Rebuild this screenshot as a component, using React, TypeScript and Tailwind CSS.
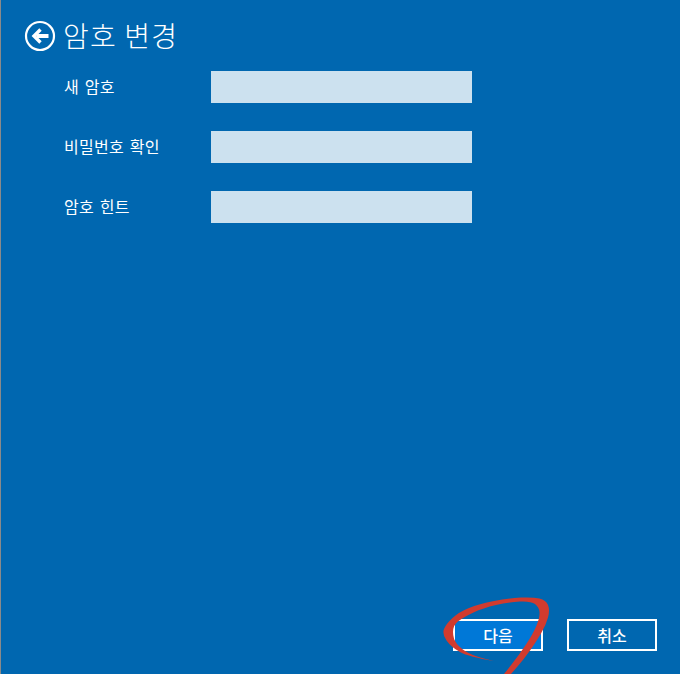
const font = { fontFamily: '"Noto Sans CJK KR", sans-serif' };

function Field({ label }: { label: string }) {
  return (
    <div className="flex h-8 items-center">
      <div className="-ml-px w-[147px] -translate-y-px text-[16px] leading-8 tracking-[0.25px] text-white [word-spacing:2px]">{label}</div>
      <input className="h-8 w-[261px] bg-[#cce1ef] outline-none" />
    </div>
  );
}

function BackIcon() {
  return (
    <svg width="32" height="32" viewBox="0 0 32 32" fill="none">
      <circle cx="16" cy="16" r="14" stroke="white" strokeWidth="2.2" />
      <path d="M24.5 16H12.5" stroke="white" strokeWidth="4" />
      <path d="M16.5 9.5L10 16l6.5 6.5" stroke="white" strokeWidth="3.4" />
    </svg>
  );
}

export default function App() {
  return (
    <div
      className="relative flex h-[674px] w-[680px] flex-col overflow-hidden border-l border-[#8a8a8a] bg-[#0067b0] pb-[23px]"
      style={font}
    >
      {/* dark ticks on the window edge */}
      <span className="absolute left-[-1px] top-[108px] h-[2px] w-px bg-[#444444]" />
      <span className="absolute left-[-1px] top-[138px] h-[2px] w-px bg-[#444444]" />
      <div className="ml-[23px] mt-[20px] flex h-[32px] items-center gap-[7px]">
        <BackIcon />
        <h1 className="-translate-y-px text-[28px] font-light leading-8 tracking-[1.2px] text-white">암호 변경</h1>
      </div>
      <div className="ml-[64px] mt-[19px] flex flex-col gap-7">
        <Field label="새 암호" />
        <Field label="비밀번호 확인" />
        <Field label="암호 힌트" />
      </div>
      <div className="mt-auto flex justify-end gap-6 pr-[23px]">
        <button className="h-8 w-[90px] border-2 border-white bg-[#0078d7] text-[16px] font-medium text-white">다음</button>
        <button className="h-8 w-[90px] border-2 border-white text-[16px] font-medium text-white">취소</button>
      </div>
      <svg className="absolute left-[433px] top-[592px]" width="125" height="82" viewBox="0 0 125 82" fill="none">
        <path
          d="M60 69Q35 65 26 60Q17 55 12.5 48.5Q8 42 10 37Q12 32 18.5 26Q25 20 35 16Q45 12 60 9Q75 6 87 5.5Q99 5 105.5 6.5Q112 8 114 13Q116 18 114 25.5Q112 33 107 41.5Q102 50 96 58.5Q90 67 83.5 74.5L77 82H70L77.5 72.5Q85 63 92 52.5Q99 42 102.5 33.5Q106 25 105.5 20Q105 15 101 12Q97 9 86 9.5Q75 10 62 13Q49 16 39.5 20.5Q30 25 24.5 29Q19 33 19 40Q19 47 23 52Q27 57 34.5 61Q42 65 60 69Z"
          fill="#d13b2e"
        />
      </svg>
    </div>
  );
}
